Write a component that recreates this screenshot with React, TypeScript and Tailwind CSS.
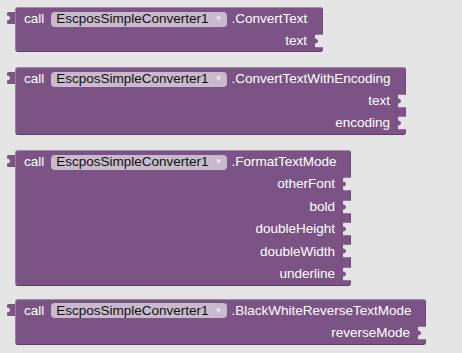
import React from "react";

type Block = {
  method: string;
  inputs: string[];
  width: string;
  rowH: string;
  gap: string;
};

const blocks: Block[] = [
  { method: ".ConvertText", inputs: ["text"], width: "w-[308px]", rowH: "h-[21px]", gap: "mt-[7px]" },
  { method: ".ConvertTextWithEncoding", inputs: ["text", "encoding"], width: "w-[391px]", rowH: "h-[22px]", gap: "mt-[15px]" },
  {
    method: ".FormatTextMode",
    inputs: ["otherFont", "bold", "doubleHeight", "doubleWidth", "underline"],
    width: "w-[336px]",
    rowH: "h-[22.4px]",
    gap: "mt-[15px]",
  },
  { method: ".BlackWhiteReverseTextMode", inputs: ["reverseMode"], width: "w-[411px]", rowH: "h-[22px]", gap: "mt-[13px]" },
];

// left puzzle tab (output connection)
function OutputTab() {
  return (
    <svg width="8" height="12" viewBox="0 0 8 12" className="absolute -left-[9px] top-[4px]">
      <path d="M8,0 H1.5 Q0,0 0,1.5 V3.5 Q3,4 3,6 Q3,8 0,8.5 V10.5 Q0,12 1.5,12 H8 Z" fill="#7b5385" />
    </svg>
  );
}

// notch cut in right edge (value input)
function Socket() {
  return (
    <svg width="8" height="13" viewBox="0 0 8 13" className="absolute -right-px top-1/2 -translate-y-1/2">
      <path d="M8,0 H1 Q0,0 0,1 V4 Q3,4.5 3,6.5 Q3,8.5 0,9 V12 Q0,13 1,13 H8 Z" fill="#e4e4e4" />
    </svg>
  );
}

function CallBlock({ b }: { b: Block }) {
  return (
    <div
      className={`relative ${b.width} ${b.gap} ml-[15px] rounded-[3px] border border-t-[#a086a7] border-l-[#9a7ea1] border-b-[#5c3e64] border-r-[#6c4974] bg-[#7b5385]`}
    >
      <OutputTab />
      {/* HEADER */}
      <div className="flex h-[22px] items-center pl-[8px] text-white">
        <span>call</span>
        <div className="ml-[7px] flex h-[15px] items-center rounded-[4px] bg-[#c9b9cd] pl-[5px] pr-[4px] text-[#111]">
          <span>EscposSimpleConverter1</span>
          <span className="ml-[6px] text-[8px] text-[#ece4ee]">▼</span>
        </div>
        <span className="ml-[5px]">{b.method}</span>
      </div>

      {/* INPUTS */}
      {b.inputs.map((name) => (
        <div key={name} className={`relative flex ${b.rowH} items-center justify-end pr-[15px] text-white`}>
          <span>{name}</span>
          <Socket />
        </div>
      ))}
    </div>
  );
}

export default function App() {
  return (
    <div className="flex h-[353px] w-[462px] flex-col overflow-hidden bg-[#e4e4e4] font-['Liberation_Sans',Arial,sans-serif] text-[13.5px] leading-none">
      {blocks.map((b) => (
        <CallBlock key={b.method} b={b} />
      ))}
    </div>
  );
}
